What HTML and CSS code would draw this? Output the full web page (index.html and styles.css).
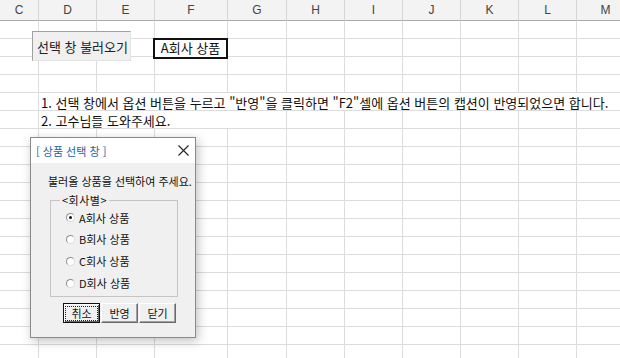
FILE: index.html
```html
<!DOCTYPE html>
<html lang="ko">

<head>
    <meta charset="UTF-8">
    <title>상품 선택</title>
    <link rel="stylesheet" href="styles.css">
</head>

<body>
    <div class="sheet">
        <div class="col-head">C</div>
        <div class="col-head">D</div>
        <div class="col-head">E</div>
        <div class="col-head">F</div>
        <div class="col-head">G</div>
        <div class="col-head">H</div>
        <div class="col-head">I</div>
        <div class="col-head">J</div>
        <div class="col-head">K</div>
        <div class="col-head">L</div>
        <div class="col-head">M</div>

        <div class="col c1"></div>
        <div class="col c2"></div>
        <div class="col c3"></div>
        <div class="col c4"></div>
        <div class="col c5"></div>
        <div class="col c6"></div>
        <div class="col c7"></div>
        <div class="col c8"></div>
        <div class="col c9"></div>
        <div class="col c10"></div>
        <div class="col c11"></div>

        <button class="load-btn">선택 창 불러오기</button>
        <div class="cell-f2">A회사 상품</div>
        <div class="note note1">1. 선택 창에서 옵션 버튼을 누르고 "반영"을 클릭하면 "F2"셀에 옵션 버튼의 캡션이 반영되었으면 합니다.</div>
        <div class="note note2">2. 고수님들 도와주세요.</div>
    </div>

    <div class="dialog">
        <div class="title-bar">
            <span class="title">[ 상품 선택 창 ]</span>
            <svg class="close" width="11" height="11" viewBox="0 0 11 11">
                <path d="M0.5 0.5 L10.5 10.5 M10.5 0.5 L0.5 10.5" stroke="#222" stroke-width="1.1" fill="none" />
            </svg>
        </div>
        <div class="dlg-body">
            <p class="prompt">불러올 상품을 선택하여 주세요.</p>
            <fieldset class="group">
                <legend>&lt;회사별&gt;</legend>
                <label class="opt"><span class="radio checked"></span>A회사 상품</label>
                <label class="opt"><span class="radio"></span>B회사 상품</label>
                <label class="opt"><span class="radio"></span>C회사 상품</label>
                <label class="opt"><span class="radio"></span>D회사 상품</label>
            </fieldset>
            <div class="actions">
                <button class="btn focused"><span>취소</span></button>
                <button class="btn"><span>반영</span></button>
                <button class="btn"><span>닫기</span></button>
            </div>
        </div>
    </div>
</body>

</html>
```

FILE: styles.css
```css
* {
    box-sizing: border-box;
    margin: 0;
    padding: 0;
}

body {
    width: 620px;
    height: 358px;
    overflow: hidden;
    position: relative;
    background: #fff;
    font-family: "Noto Sans CJK KR", "Noto Sans", sans-serif;
    color: #111;
}

.sheet {
    display: grid;
    grid-template-columns: 39px 58px 58px 73px 59px 58px 58px 58px 58px 58px 58px;
    grid-template-rows: 21px repeat(19, 18px);
    width: 635px;
}

.col-head {
    grid-row: 1;
    background: #f3f3f3;
    border-right: 1px solid #d6d6d6;
    border-bottom: 1px solid #ababab;
    font-size: 12px;
    line-height: 20px;
    text-align: center;
    color: #444;
    font-family: "Liberation Sans", sans-serif;
}

.col {
    grid-row: 2 / -1;
    border-right: 1px solid #dcdcdc;
    background: repeating-linear-gradient(to bottom, transparent 0 17px, #dcdcdc 17px 18px);
}

.c1 { grid-column: 1; }
.c2 { grid-column: 2; }
.c3 { grid-column: 3; }
.c4 { grid-column: 4; }
.c5 { grid-column: 5; }
.c6 { grid-column: 6; }
.c7 { grid-column: 7; }
.c8 { grid-column: 8; }
.c9 { grid-column: 9; }
.c10 { grid-column: 10; }
.c11 { grid-column: 11; }

.load-btn {
    grid-column: 1 / 4;
    grid-row: 2 / 4;
    margin: 10px 0 0 32px;
    width: 99px;
    height: 30px;
    background: #f0f0f0;
    border: 1px solid #e3e3e3;
    border-top-color: #a0a0a0;
    border-left-color: #a0a0a0;
    font-family: inherit;
    font-size: 13px;
    color: #222;
    text-align: left;
    padding: 1px 0 0 4px;
    z-index: 1;
}

.cell-f2 {
    grid-column: 4;
    grid-row: 3;
    margin: -1px 0 -2px -2px;
    border: 2px solid #111;
    background: #fff;
    font-size: 13px;
    line-height: 16px;
    text-align: center;
    z-index: 1;
}

.note {
    grid-row: 6;
    grid-column: 2 / -1;
    background: #fff;
    margin: 0 0 1px 1px;
    padding: 1px 0 0 1px;
    font-size: 13px;
    line-height: 17px;
    white-space: nowrap;
    z-index: 1;
}

.note2 {
    grid-row: 7;
    grid-column: 2 / 5;
}

.dialog {
    position: absolute;
    left: 30px;
    top: 137px;
    width: 166px;
    height: 201px;
    background: #f0f0f0;
    border: 1px solid #8a8a8a;
    box-shadow: 2px 3px 10px rgba(0, 0, 0, 0.25);
    font-size: 11px;
    z-index: 5;
}

.title-bar {
    height: 25px;
    background: #fff;
    display: flex;
    align-items: center;
    justify-content: space-between;
    padding: 0 6px 0 5px;
}

.title {
    color: #1d5fa8;
    font-size: 11px;
}

.dlg-body {
    padding: 10px 0 0 17px;
}

.prompt {
    font-size: 11px;
    line-height: 16px;
    margin-bottom: 4px;
}

.group {
    width: 128px;
    margin-left: 2px;
    border: 1px solid #c4c4c4;
    padding: 0 0 2px 15px;
    display: flex;
    flex-direction: column;
}

.group legend {
    margin-left: -6px;
    padding: 0 2px;
    font-size: 11px;
    line-height: 14px;
    letter-spacing: 0.5px;
}

.opt {
    display: flex;
    align-items: center;
    flex-shrink: 0;
    height: 22px;
    gap: 4px;
}

.opt:first-of-type {
    height: 21px;
}

.radio {
    width: 9px;
    height: 9px;
    border-radius: 50%;
    background: #fff;
    border: 1px solid #8d8d8d;
    border-right-color: #dcdcdc;
    border-bottom-color: #dcdcdc;
    position: relative;
}

.radio.checked::after {
    content: "";
    position: absolute;
    left: 2px;
    top: 2px;
    width: 3px;
    height: 3px;
    border-radius: 50%;
    background: #111;
}

.actions {
    display: flex;
    gap: 1px;
    margin: 6px 0 0 15px;
}

.btn {
    width: 37px;
    height: 20px;
    background: #f0f0f0;
    border: 1px solid #fff;
    border-right-color: #6a6a6a;
    border-bottom-color: #6a6a6a;
    box-shadow: inset -1px -1px 0 #a0a0a0;
    font-family: inherit;
    font-size: 11px;
    color: #111;
}

.btn.focused {
    border: 1px solid #111;
    box-shadow: inset 1px 1px 0 #fff, inset -1px -1px 0 #6a6a6a;
}

.btn.focused span {
    display: inline-block;
    padding: 0 5px;
    outline: 1px dotted #222;
    line-height: 13px;
}
```
